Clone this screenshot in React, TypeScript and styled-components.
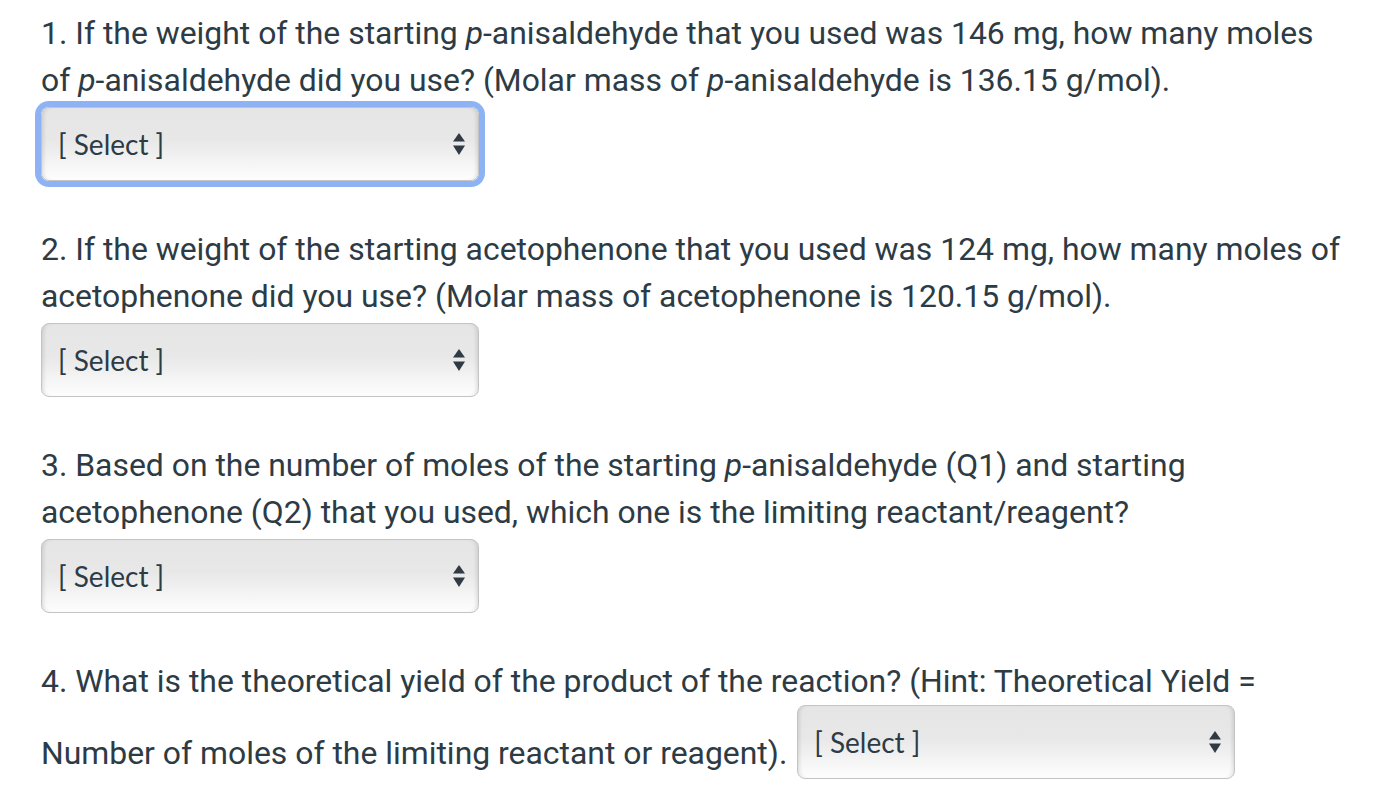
import React from 'react';
import styled, { createGlobalStyle, css } from 'styled-components';

const GlobalStyle = createGlobalStyle`
  html, body {
    margin: 0;
    padding: 0;
    background: #ffffff;
  }
  body {
    font-family: Roboto, "Liberation Sans", Arial, sans-serif;
    color: #2d3b45;
  }
`;

const Page = styled.main`
  width: 1305px;
  padding: 10px 0 0 41px;
`;

const Question = styled.section`
  margin-bottom: 45px;
`;

const Prompt = styled.p`
  margin: 0;
  font-size: 31.9px;
  line-height: 47px;

  i {
    font-style: italic;
  }
`;

const SelectWrap = styled.span<{ $inline?: boolean }>`
  position: relative;
  width: 438px;
  height: 74px;
  ${p =>
    p.$inline
      ? css`
          display: inline-block;
          margin-left: 2px;
          vertical-align: 11px;
        `
      : css`
          display: block;
          margin-top: 3px;
        `}
`;

const Select = styled.select<{ $focused?: boolean }>`
  appearance: none;
  -webkit-appearance: none;
  box-sizing: border-box;
  width: 100%;
  height: 100%;
  margin: 0;
  padding: 0 50px 0 16px;
  border: 1px solid #c4c4c4;
  border-radius: 8px;
  font-family: Lato, "Liberation Sans", sans-serif;
  font-size: 28px;
  color: #2d3b45;
  background: linear-gradient(to bottom, #e5e5e5 0%, #e8e8e8 45%, #f6f6f6 80%, #fdfdfd 100%);
  box-shadow: inset 4px 0 4px -3px rgba(0, 0, 0, 0.14),
    inset -4px 0 4px -3px rgba(0, 0, 0, 0.14)
    ${p => (p.$focused ? ', 0 0 0 6px #8db3f4' : '')};
  outline: none;
  cursor: pointer;
`;

const Arrows = styled.svg`
  position: absolute;
  right: 14px;
  top: 50%;
  width: 12px;
  height: 24px;
  margin-top: -12px;
  pointer-events: none;
`;

type PickerProps = { inline?: boolean; focused?: boolean };

const Picker = ({ inline, focused }: PickerProps) => (
  <SelectWrap $inline={inline}>
    <Select $focused={focused} defaultValue="">
      <option value="">[ Select ]</option>
      <option value="a">Option A</option>
      <option value="b">Option B</option>
    </Select>
    <Arrows viewBox="0 0 12 24">
      <path d="M6 1 L12 9.5 L0 9.5 Z" fill="#2f3a44" />
      <path d="M0 13.5 L12 13.5 L6 23 Z" fill="#2f3a44" />
    </Arrows>
  </SelectWrap>
);

const App = () => (
  <Page>
    <GlobalStyle />
    <Question>
      <Prompt>
        1. If the weight of the starting <i>p</i>-anisaldehyde that you used was 146 mg, how many moles
        of <i>p</i>-anisaldehyde did you use? (Molar mass of <i>p</i>-anisaldehyde is 136.15 g/mol).
      </Prompt>
      <Picker focused />
    </Question>
    <Question>
      <Prompt>
        2. If the weight of the starting acetophenone that you used was 124 mg, how many moles of
        acetophenone did you use? (Molar mass of acetophenone is 120.15 g/mol).
      </Prompt>
      <Picker />
    </Question>
    <Question>
      <Prompt>
        3. Based on the number of moles of the starting <i>p</i>-anisaldehyde (Q1) and starting
        acetophenone (Q2) that you used, which one is the limiting reactant/reagent?
      </Prompt>
      <Picker />
    </Question>
    <Question>
      <Prompt>
        4. What is the theoretical yield of the product of the reaction? (Hint: Theoretical Yield =
        Number of moles of the limiting reactant or reagent). <Picker inline />
      </Prompt>
    </Question>
  </Page>
);

export default App;
